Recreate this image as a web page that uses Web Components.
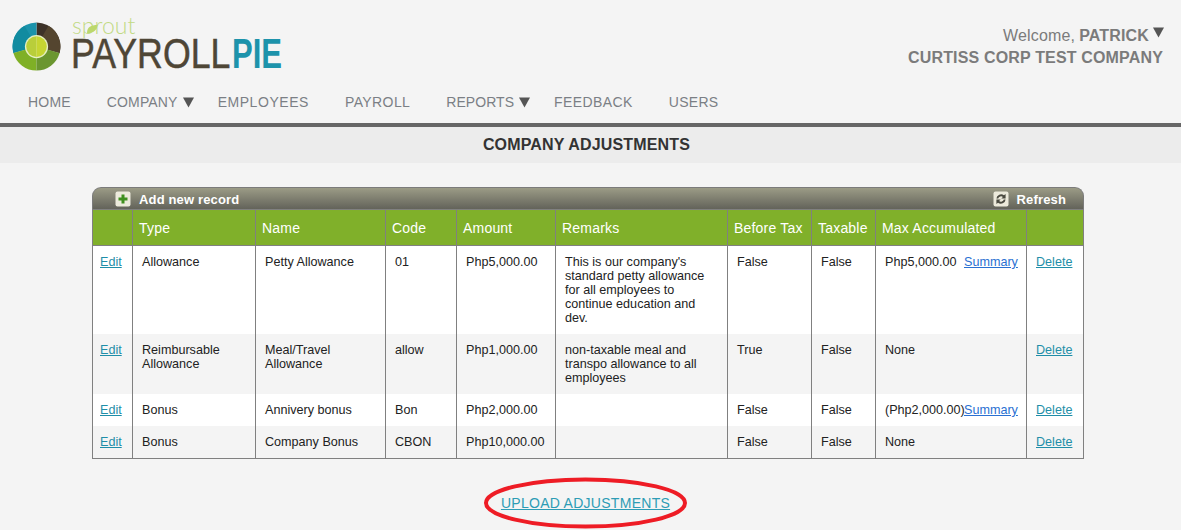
<!DOCTYPE html>
<html>
<head>
<meta charset="utf-8">
<title>Company Adjustments</title>
<style>
  html, body { margin:0; padding:0; background:#f4f4f4; font-family:"Liberation Sans", Arial, sans-serif; }
</style>
</head>
<body>
<app-header></app-header>
<page-title>COMPANY ADJUSTMENTS</page-title>
<adjustments-grid></adjustments-grid>
<upload-link>UPLOAD ADJUSTMENTS</upload-link>

<script>
const DOWN_ARROW = `<svg class="arrow" viewBox="0 0 11 11" width="11" height="11" aria-hidden="true"><path d="M0 0.5H11L5.5 10.5Z" fill="#555"></path></svg>`;

class PayrollLogo extends HTMLElement {
  constructor() {
    super();
    this.attachShadow({ mode: "open" });
    this.shadowRoot.innerHTML = `
      <style>
        :host { display:block; width:290px; height:76px; }
        svg { display:block; }
        text { font-family:"Liberation Sans", Arial, sans-serif; }
        .sprout { font-family:Lato, "Liberation Sans", sans-serif; font-weight:300; }
      </style>
      <svg width="290" height="76" viewBox="0 0 290 76">
        <path d="M36.5 46.6V22.6A24 24 0 0 1 59.6 53Z" fill="#3d3228"></path>
        <path d="M36.5 46.6L48.5 25.8A24 24 0 0 1 59.6 53Z" fill="#54452f"></path>
        <path d="M36.5 46.6V22.6A24 24 0 0 0 13.4 53Z" fill="#1b93ab"></path>
        <path d="M36.5 46.6L24.5 25.8A24 24 0 0 0 13.4 53Z" fill="#118ba0"></path>
        <path d="M36.5 46.6L13.4 53A24 24 0 0 0 36.5 70.6Z" fill="#7fb026"></path>
        <path d="M36.5 46.6L59.6 53A24 24 0 0 1 36.5 70.6Z" fill="#6b9630"></path>
        <circle cx="36.5" cy="46.6" r="11.6" fill="#e6efc4"></circle>
        <path d="M36.5 36.3A10.3 10.3 0 0 0 36.5 56.9Z" fill="#b9ce3a"></path>
        <path d="M36.5 36.3A10.3 10.3 0 0 1 36.5 56.9Z" fill="#c6d532"></path>
        <text class="sprout" x="72" y="34" font-size="23" fill="#c2da84">sprout</text>
        <path d="M87 33C87 27 91 25 97.5 25C97.5 30 93 33.5 87 33Z" fill="#bcd86c"></path>
        <text transform="translate(71 68) scale(.85 1)" font-size="42" fill="#4e4636" stroke="#4e4636" stroke-width=".5">PAYROLL</text>
        <text transform="translate(232 68) scale(.74 1)" font-size="42" font-weight="700" fill="#1d93ab">PIE</text>
      </svg>
    `;
  }
}

class NavItem extends HTMLElement {
  constructor() {
    super();
    this.attachShadow({ mode: "open" });
    this.shadowRoot.innerHTML = `
      <style>
        :host { display:flex; align-items:center; font-size:14px; line-height:16px; color:#7b7f85; white-space:nowrap; }
        .arrow { display:none; margin:1px -12px 0 5px; }
        :host([menu]) .arrow { display:block; }
      </style>
      <slot></slot>${DOWN_ARROW}
    `;
  }
}

class AppHeader extends HTMLElement {
  constructor() {
    super();
    this.attachShadow({ mode: "open" });
    this.shadowRoot.innerHTML = `
      <style>
        :host { display:block; height:123px; border-bottom:4px solid #666; box-sizing:content-box; }
        .top { display:flex; justify-content:space-between; height:94px; }
        .user { padding:25px 18px 0 0; text-align:right; color:#7b7b7b; font-size:16px; line-height:22px; letter-spacing:.16px; }
        .welcome { display:flex; justify-content:flex-end; align-items:flex-start; }
        .welcome b { margin-left:4px; }
        .welcome .arrow { margin:2px -1px 0 4px; }
        .company { font-weight:700; }
        nav { display:flex; gap:36px; padding-left:28px; }
      </style>
      <div class="top">
        <payroll-logo></payroll-logo>
        <div class="user">
          <div class="welcome"><span>Welcome,</span><b>PATRICK</b>${DOWN_ARROW}</div>
          <div class="company">CURTISS CORP TEST COMPANY</div>
        </div>
      </div>
      <nav>
        <nav-item style="letter-spacing:.2px">HOME</nav-item>
        <nav-item menu style="letter-spacing:.15px">COMPANY</nav-item>
        <nav-item style="letter-spacing:.55px">EMPLOYEES</nav-item>
        <nav-item style="letter-spacing:.4px">PAYROLL</nav-item>
        <nav-item menu style="letter-spacing:.05px">REPORTS</nav-item>
        <nav-item style="letter-spacing:.4px">FEEDBACK</nav-item>
        <nav-item style="letter-spacing:.3px">USERS</nav-item>
      </nav>
    `;
  }
}

class PageTitle extends HTMLElement {
  constructor() {
    super();
    this.attachShadow({ mode: "open" });
    this.shadowRoot.innerHTML = `
      <style>
        :host { display:block; height:36px; line-height:35px; padding-right:8px; background:#ececec; text-align:center; font-size:16px; font-weight:700; color:#333; letter-spacing:.16px; }
      </style>
      <slot></slot>
    `;
  }
}

const COLUMNS = [
  { label: "", width: 40 },
  { label: "Type", width: 123 },
  { label: "Name", width: 130 },
  { label: "Code", width: 71 },
  { label: "Amount", width: 99 },
  { label: "Remarks", width: 172 },
  { label: "Before Tax", width: 84 },
  { label: "Taxable", width: 64 },
  { label: "Max Accumulated", width: 151 },
  { label: "", width: 57 },
];

const ROWS = [
  ["Allowance", "Petty Allowance", "01", "Php5,000.00", "This is our company's standard petty allowance for all employees to continue education and dev.", "False", "False", "Php5,000.00", true],
  ["Reimbursable Allowance", "Meal/Travel Allowance", "allow", "Php1,000.00", "non-taxable meal and transpo allowance to all employees", "True", "False", "None", false],
  ["Bonus", "Annivery bonus", "Bon", "Php2,000.00", "", "False", "False", "(Php2,000.00)", true],
  ["Bonus", "Company Bonus", "CBON", "Php10,000.00", "", "False", "False", "None", false],
];

class AdjustmentsGrid extends HTMLElement {
  constructor() {
    super();
    this.attachShadow({ mode: "open" });
    const cols = COLUMNS.map((c) => `<col style="width:${c.width}px">`).join("");
    const head = COLUMNS.map((c) => `<th>${c.label}</th>`).join("");
    const body = ROWS.map((r) => `
      <tr>
        <td class="edit"><a>Edit</a></td>
        <td>${r[0]}</td>
        <td>${r[1]}</td>
        <td>${r[2]}</td>
        <td>${r[3]}</td>
        <td class="remarks">${r[4]}</td>
        <td>${r[5]}</td>
        <td>${r[6]}</td>
        <td class="accum"><span class="max">${r[7]}</span>${r[8] ? `<a class="summary">Summary</a>` : ""}</td>
        <td class="del"><a>Delete</a></td>
      </tr>`).join("");
    this.shadowRoot.innerHTML = `
      <style>
        :host { display:block; width:992px; margin:24px 0 0 92px; font-size:12.6px; color:#222; }
        .bar {
          display:flex;
          align-items:center;
          justify-content:space-between;
          height:22px;
          box-sizing:border-box;
          padding:1px 17px 0 22px;
          border:1px solid #7b7b7b;
          border-bottom:0;
          border-radius:9px 9px 0 0;
          background:linear-gradient(#9b9b86, #63635a);
          color:#fff;
          font-size:13px;
          font-weight:700;
          letter-spacing:.15px;
        }
        .cmd { display:flex; align-items:center; gap:8px; }
        .cmd svg { display:block; }
        table { table-layout:fixed; width:992px; border-collapse:collapse; }
        th {
          height:35px;
          padding:0 6px;
          background:#80b02a;
          border:1px solid #808080;
          color:#fff;
          font-size:14px;
          font-weight:400;
          text-align:left;
          white-space:nowrap;
          letter-spacing:.2px;
        }
        td {
          padding:9px 9px 9px;
          border:1px solid #808080;
          border-top:0;
          border-bottom:0;
          line-height:14px;
          vertical-align:top;
        }
        tr:nth-child(odd) td { background:#fff; }
        tr:nth-child(even) td { background:#f4f4f4; }
        tbody tr:last-child td { border-bottom:1px solid #808080; }
        td.edit { padding-left:7px; padding-right:0; }
        td.remarks { padding-left:9px; padding-right:10px; }
        td.del { padding-left:9px; padding-right:0; }
        td.accum { white-space:nowrap; }
        a { color:#1f8ea8; text-decoration:underline; }
        .max { display:inline-block; width:79px; white-space:nowrap; }
        .summary { color:#2a70d2; }
      </style>
      <div class="bar">
        <span class="cmd">
          <svg width="16" height="16" viewBox="0 0 16 16"><rect x=".5" y=".5" width="15" height="15" rx="2" fill="#eceadb"></rect><path d="M6.5 3.5h3v3h3v3h-3v3h-3v-3h-3v-3h3Z" fill="#3f8f1f"></path></svg>
          Add new record
        </span>
        <span class="cmd">
          <svg width="16" height="16" viewBox="0 0 16 16"><rect x=".5" y=".5" width="15" height="15" rx="2" fill="#eceadb"></rect><path d="M3.4 7.5A4.7 4.7 0 0 1 11 4.3L12.6 3V7.4H8.3L9.9 5.9A3 3 0 0 0 5.2 7.5ZM12.6 8.5A4.7 4.7 0 0 1 5 11.7L3.4 13V8.6H7.7L6.1 10.1A3 3 0 0 0 10.8 8.5Z" fill="#4a4a40"></path></svg>
          Refresh
        </span>
      </div>
      <table>
        <colgroup>${cols}</colgroup>
        <thead><tr>${head}</tr></thead>
        <tbody>${body}</tbody>
      </table>
    `;
  }
}

class UploadLink extends HTMLElement {
  constructor() {
    super();
    this.attachShadow({ mode: "open" });
    this.shadowRoot.innerHTML = `
      <style>
        :host { display:block; position:relative; width:205px; margin:18px 0 0 483px; height:52px; font-size:14px; line-height:16px; text-align:center; letter-spacing:.28px; }
        a { display:inline-block; margin-top:18px; color:#2d9cb5; text-decoration:underline; white-space:nowrap; }
        svg { position:absolute; left:0; top:0; }
      </style>
      <a><slot></slot></a>
      <svg width="205" height="52" viewBox="0 0 205 52" aria-hidden="true"><ellipse cx="102.5" cy="26" rx="99.5" ry="23.5" fill="none" stroke="#ee1c25" stroke-width="4"></ellipse></svg>
    `;
  }
}

customElements.define("payroll-logo", PayrollLogo);
customElements.define("nav-item", NavItem);
customElements.define("app-header", AppHeader);
customElements.define("page-title", PageTitle);
customElements.define("adjustments-grid", AdjustmentsGrid);
customElements.define("upload-link", UploadLink);
</script>
</body>
</html>
